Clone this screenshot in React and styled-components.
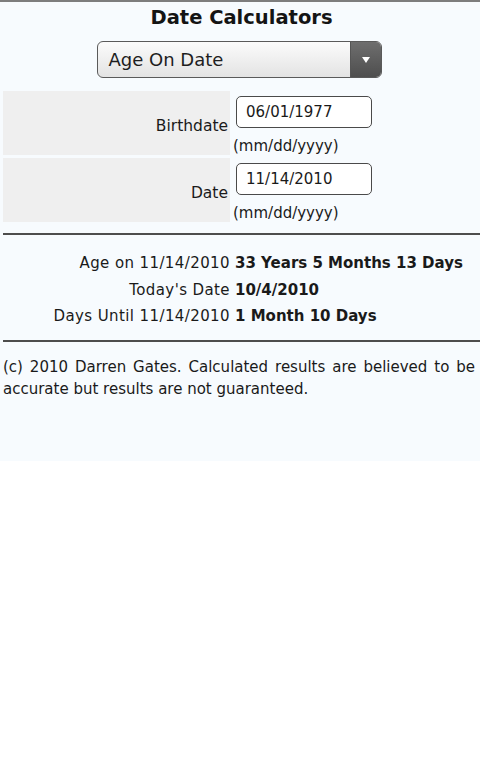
import React from "react";
import styled, { createGlobalStyle } from "styled-components";

const Global = createGlobalStyle`
  html, body { margin: 0; padding: 0; background: #ffffff; }
  body { font-family: "DejaVu Sans", Verdana, sans-serif; color: #1a1a1a; }
`;

const Page = styled.div`
  background: #f7fbfe;
  border-top: 2px solid #7d7d7d;
  min-height: 461px;
  padding: 0 0 0 3px;
  box-sizing: border-box;
`;

const Title = styled.h1`
  margin: 0;
  padding-top: 4px;
  text-align: center;
  font-size: 19.5px;
  font-weight: bold;
  line-height: 23px;
  color: #141414;
`;

const SelectRow = styled.div`
  display: flex;
  justify-content: center;
  margin-top: 12px;
  padding-right: 3px;
`;

const Select = styled.div`
  width: 285px;
  height: 37px;
  box-sizing: border-box;
  border: 1px solid #5a5a5a;
  border-radius: 6px;
  display: flex;
  overflow: hidden;
  background: linear-gradient(#fbfbfb, #e3e3e3);
  margin-left: -2px;
`;

const SelectText = styled.div`
  flex: 1;
  display: flex;
  align-items: center;
  padding-left: 11px;
  font-size: 18px;
  color: #1e1e1e;
`;

const SelectButton = styled.div`
  width: 30px;
  display: flex;
  align-items: center;
  justify-content: center;
  background: linear-gradient(#6e6e6e, #4e4e4e);
  border-left: 1px solid #555;
`;

const FormTable = styled.div`
  display: grid;
  grid-template-columns: 227px 1fr;
  row-gap: 3px;
  margin-top: 13px;
`;

const LabelCell = styled.div`
  background: #efefef;
  height: 64px;
  display: flex;
  align-items: center;
  justify-content: flex-end;
  padding-right: 2px;
  font-size: 15.5px;
  padding-top: 6px;
  box-sizing: border-box;
`;

const InputCell = styled.div`
  padding: 5px 0 0 3px;
  display: flex;
  flex-direction: column;
  align-items: flex-start;
`;

const Input = styled.div`
  width: 136px;
  height: 32px;
  box-sizing: border-box;
  border: 1px solid #4a4a4a;
  border-radius: 5px;
  background: #fff;
  font-size: 15px;
  padding: 6px 0 0 9px;
  margin-left: 3px;
  color: #1a1a1a;
`;

const Hint = styled.div`
  font-size: 15px;
  margin-top: 9px;
`;

const Rule = styled.hr`
  border: 0;
  height: 2px;
  background: #4d4d4d;
  margin: ${(p) => p.$top}px 0 0 0;
`;

const Results = styled.div`
  display: grid;
  grid-template-columns: 227px auto;
  column-gap: 5px;
  row-gap: 6px;
  padding: 18px 0 13px;
  font-size: 15px;
  line-height: 20.5px;
`;

const ResultLabel = styled.div`
  text-align: right;
  letter-spacing: 0.4px;
`;

const ResultValue = styled.div`
  font-weight: bold;
`;

const Footer = styled.p`
  margin: 0;
  padding: 14px 5px 0 0;
  font-size: 15px;
  line-height: 22px;
  text-align: justify;
`;

const results = [
  ["Age on 11/14/2010", "33 Years 5 Months 13 Days"],
  ["Today's Date", "10/4/2010"],
  ["Days Until 11/14/2010", "1 Month 10 Days"],
];

export default function App() {
  return (
    <>
      <Global />
      <Page>
        <Title>Date Calculators</Title>
        <SelectRow>
          <Select>
            <SelectText>Age On Date</SelectText>
            <SelectButton>
              <svg width="10" height="8" viewBox="0 0 10 8">
                <path d="M1 1 L9 1 L5 7 Z" fill="#ffffff" />
              </svg>
            </SelectButton>
          </Select>
        </SelectRow>
        <FormTable>
          <LabelCell>Birthdate</LabelCell>
          <InputCell>
            <Input>06/01/1977</Input>
            <Hint>(mm/dd/yyyy)</Hint>
          </InputCell>
          <LabelCell>Date</LabelCell>
          <InputCell>
            <Input>11/14/2010</Input>
            <Hint>(mm/dd/yyyy)</Hint>
          </InputCell>
        </FormTable>
        <Rule $top={11} />
        <Results>
          {results.map(([l, v]) => (
            <React.Fragment key={l}>
              <ResultLabel>{l}</ResultLabel>
              <ResultValue>{v}</ResultValue>
            </React.Fragment>
          ))}
        </Results>
        <Rule $top={0} />
        <Footer>
          (c) 2010 Darren Gates. Calculated results are believed to be accurate but results are not guaranteed.
        </Footer>
      </Page>
    </>
  );
}
